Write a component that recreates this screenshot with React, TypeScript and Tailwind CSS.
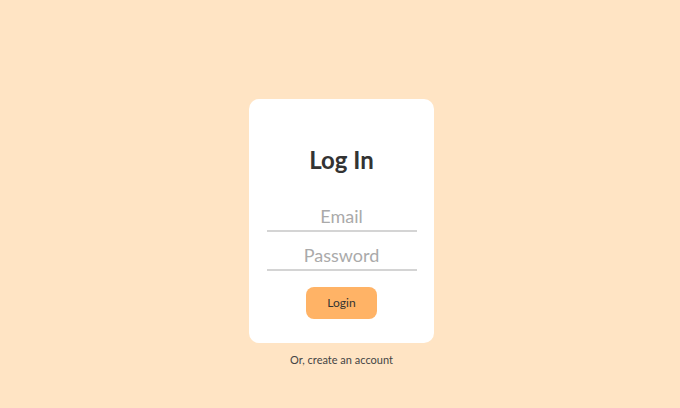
export default function App() {
  return (
    <main
      className="min-h-screen w-full bg-[#ffe4c4] flex flex-col items-center pt-[99px] pl-[3px]"
      style={{ fontFamily: "Lato, 'Noto Sans', sans-serif" }}
    >
      {/* Card */}
      <div className="w-[185px] h-[244px] bg-white rounded-[10px] flex flex-col items-center pt-[45px]">
        <h1 className="text-[24px] leading-[32px] font-bold text-[#333]">Log In</h1>

        <form className="flex flex-col items-center mt-[26px]" onSubmit={(e) => e.preventDefault()}>
          <input
            type="email"
            placeholder="Email"
            className="w-[150px] h-[30px] text-center text-[18px] text-[#333] placeholder:text-[#aaa] border-b-2 border-[#d4d4d4] outline-none bg-transparent"
          />
          <input
            type="password"
            placeholder="Password"
            className="w-[150px] h-[30px] mt-[9px] text-center text-[18px] text-[#333] placeholder:text-[#aaa] border-b-2 border-[#d4d4d4] outline-none bg-transparent"
          />
          <button
            type="submit"
            className="mt-[16px] w-[71px] h-[32px] rounded-[8px] bg-[#ffb366] text-[12px] text-[#333]"
          >
            Login
          </button>
        </form>
      </div>

      <a href="#" className="mt-[9px] text-[11px] text-[#444]">
        Or, create an account
      </a>
    </main>
  );
}
